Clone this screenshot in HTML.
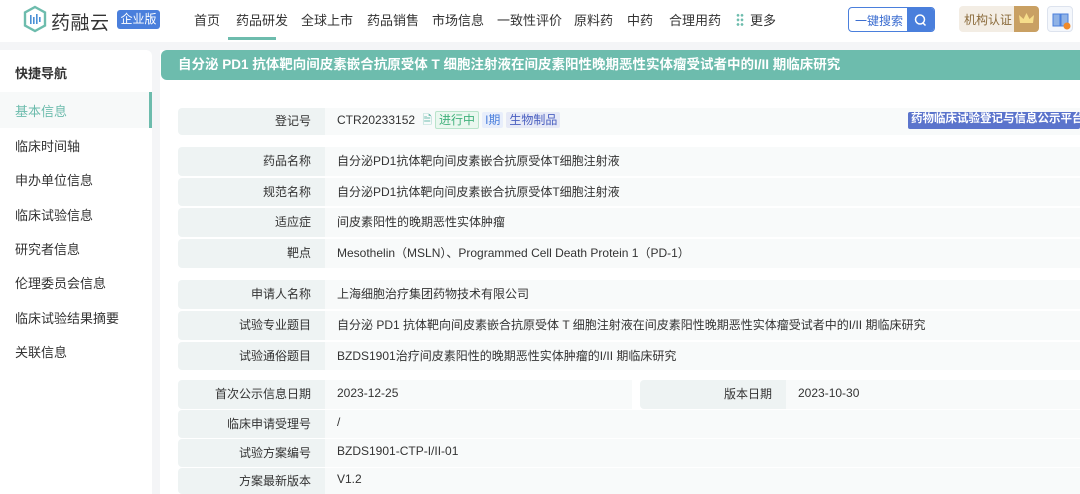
<!DOCTYPE html>
<html><head><meta charset="utf-8"><style>
*{margin:0;padding:0;box-sizing:border-box}
body{width:1080px;height:494px;overflow:hidden;background:#f4f5f7;font-family:"Liberation Sans","Noto Sans CJK SC",sans-serif;color:#333;position:relative}
.hdr{position:absolute;left:0;top:0;width:1080px;height:42px;background:#fff}
.nav a{position:absolute;top:10px;font-size:13px;color:#333;text-decoration:none}
.side{position:absolute;left:0;top:50px;width:152px;height:444px;background:#fff;border-radius:0 6px 0 0}
.side div{position:absolute;left:15px;font-size:13px;color:#333}
.main{position:absolute;left:160px;top:50px;width:920px;height:444px;background:#fff}
.title{position:absolute;left:161px;top:50px;width:919px;height:30px;background:#6dbcad;border-radius:6px 0 0 6px;color:#fff;font-weight:bold;font-size:13.5px;line-height:30px;padding-left:17px;white-space:nowrap}
.l{position:absolute;background:#eef3f3;border-radius:4px 0 0 4px;font-size:12px;color:#333;text-align:right;padding-right:14px}
.v{position:absolute;background:#f8fafa;font-size:12px;color:#333;padding-left:12px;white-space:nowrap}
.tag{display:inline-block;font-size:12px;line-height:16px;padding:0 3px;border-radius:2px;margin-left:3px}
</style></head><body>
<div class="hdr">
<svg style="position:absolute;left:22px;top:5px" width="26" height="28" viewBox="0 0 26 28"><path d="M13 2 L23 7.5 L23 20.5 L13 26 L3 20.5 L3 7.5 Z" fill="none" stroke="#6dbcad" stroke-width="2.4"/><g fill="#4a8fd6"><rect x="8" y="10" width="1.6" height="9"/><rect x="11" y="12" width="1.6" height="7"/><rect x="14" y="9" width="1.6" height="10"/><rect x="17" y="12" width="1.6" height="5"/></g></svg>
<div style="position:absolute;left:51px;top:8px;font-size:19px;color:#333;letter-spacing:0.5px;white-space:nowrap">药融云</div>
<div style="position:absolute;left:117px;top:10px;width:43px;height:19px;background:#4a7fdc;border-radius:3px;color:#fff;font-size:12px;line-height:19px;text-align:center">企业版</div>
<div class="nav">
<a style="left:194px">首页</a><a style="left:236px">药品研发</a><a style="left:301px">全球上市</a><a style="left:367px">药品销售</a><a style="left:432px">市场信息</a><a style="left:497px">一致性评价</a><a style="left:574px">原料药</a><a style="left:627px">中药</a><a style="left:669px">合理用药</a><a style="left:750px">更多</a>
</div>
<div style="position:absolute;left:736px;top:13px;width:8px;height:14px;background:radial-gradient(circle,#6dbcad 1.2px,transparent 1.5px) 0 0/4px 4.6px"></div>
<div style="position:absolute;left:228px;top:37px;width:48px;height:3px;background:#6dbcad"></div>
<div style="position:absolute;left:848px;top:7px;width:87px;height:25px;border:1px solid #4a7fdc;border-radius:4px;background:#fff;overflow:hidden"><span style="position:absolute;left:6px;top:4px;font-size:12px;color:#3a6cd0;white-space:nowrap">一键搜索</span><div style="position:absolute;right:0;top:0;width:27px;height:25px;background:#4a7fdc"><svg width="27" height="25"><circle cx="13" cy="11.5" r="4.5" fill="none" stroke="#fff" stroke-width="1.5"/><path d="M16 15 L18.5 17.5" stroke="#fff" stroke-width="1.5"/></svg></div></div>
<div style="position:absolute;left:959px;top:6px;width:80px;height:26px;background:#f3ede4;border-radius:4px"><span style="position:absolute;left:5px;top:5px;font-size:12px;color:#8a6a3a;white-space:nowrap">机构认证</span><div style="position:absolute;right:0;top:0;width:25px;height:26px;background:#c9a063;border-radius:0 4px 4px 0"><svg width="25" height="26"><path d="M6 17 L5 9 L9.5 13 L12.5 7 L15.5 13 L20 9 L19 17 Z" fill="#f6dd8a"/></svg></div></div>
<div style="position:absolute;left:1047px;top:6px;width:26px;height:26px;border:1px solid #dde3ee;border-radius:4px;background:#f4f7fc"><svg width="26" height="26"><path d="M5 7 h7 v12 h-7z M13 7 h7 v12 h-7z" fill="#8fb2e6" stroke="#4a7fdc" stroke-width="1"/><circle cx="19" cy="19" r="3.5" fill="#f08a2a"/></svg></div>
</div>
<div class="side">
<div style="top:13px;font-weight:bold">快捷导航</div>
<div style="left:0;top:42px;width:152px;height:36px;background:#f7f9f9;border-right:3px solid #6dbcad"></div>
<div style="top:51px;color:#6dbcad">基本信息</div>
<div style="top:86px">临床时间轴</div>
<div style="top:120px">申办单位信息</div>
<div style="top:155px">临床试验信息</div>
<div style="top:189px">研究者信息</div>
<div style="top:223px">伦理委员会信息</div>
<div style="top:258px">临床试验结果摘要</div>
<div style="top:292px">关联信息</div>
</div>
<div class="main"></div>
<div class="title">自分泌 PD1 抗体靶向间皮素嵌合抗原受体 T 细胞注射液在间皮素阳性晚期恶性实体瘤受试者中的I/II 期临床研究</div>

<div class="l" style="left:178px;top:108px;width:147px;height:27px;line-height:27px">登记号</div>
<div class="v" style="left:325px;top:108px;width:755px;height:27px;line-height:25px">CTR20233152 <span style="color:#6dbcad;margin-left:4px">🗎</span><span class="tag" style="color:#3fb07a;background:#eaf7ef;border:1px solid #b9e4cb">进行中</span><span class="tag" style="color:#4a7fdc;background:#e8eefb">I期</span><span class="tag" style="color:#4a5fc0;background:#e6e9f6">生物制品</span></div>
<div style="position:absolute;left:908px;top:112px;width:172px;height:17px;background:#5b74cc;border-radius:2px;color:#fff;font-size:11.5px;font-weight:bold;line-height:14px;padding-left:3px;overflow:hidden;white-space:nowrap">药物临床试验登记与信息公示平台</div>

<div class="l" style="left:178px;top:147px;width:147px;height:29px;line-height:29px">药品名称</div><div class="v" style="left:325px;top:147px;width:755px;height:29px;line-height:29px">自分泌PD1抗体靶向间皮素嵌合抗原受体T细胞注射液</div>
<div class="l" style="left:178px;top:178px;width:147px;height:28px;line-height:28px">规范名称</div><div class="v" style="left:325px;top:178px;width:755px;height:28px;line-height:28px">自分泌PD1抗体靶向间皮素嵌合抗原受体T细胞注射液</div>
<div class="l" style="left:178px;top:208px;width:147px;height:29px;line-height:29px">适应症</div><div class="v" style="left:325px;top:208px;width:755px;height:29px;line-height:29px">间皮素阳性的晚期恶性实体肿瘤</div>
<div class="l" style="left:178px;top:239px;width:147px;height:29px;line-height:29px">靶点</div><div class="v" style="left:325px;top:239px;width:755px;height:29px;line-height:29px">Mesothelin（MSLN）、Programmed Cell Death Protein 1（PD-1）</div>

<div class="l" style="left:178px;top:280px;width:147px;height:29px;line-height:29px">申请人名称</div><div class="v" style="left:325px;top:280px;width:755px;height:29px;line-height:29px">上海细胞治疗集团药物技术有限公司</div>
<div class="l" style="left:178px;top:311px;width:147px;height:29px;line-height:29px">试验专业题目</div><div class="v" style="left:325px;top:311px;width:755px;height:29px;line-height:29px">自分泌 PD1 抗体靶向间皮素嵌合抗原受体 T 细胞注射液在间皮素阳性晚期恶性实体瘤受试者中的I/II 期临床研究</div>
<div class="l" style="left:178px;top:342px;width:147px;height:28px;line-height:28px">试验通俗题目</div><div class="v" style="left:325px;top:342px;width:755px;height:28px;line-height:28px">BZDS1901治疗间皮素阳性的晚期恶性实体肿瘤的I/II 期临床研究</div>

<div class="l" style="left:178px;top:380px;width:147px;height:29px;line-height:29px">首次公示信息日期</div><div class="v" style="left:325px;top:380px;width:307px;height:29px;line-height:26px">2023-12-25</div>
<div class="l" style="left:640px;top:380px;width:146px;height:29px;line-height:29px">版本日期</div><div class="v" style="left:786px;top:380px;width:294px;height:29px;line-height:26px">2023-10-30</div>
<div class="l" style="left:178px;top:410px;width:147px;height:28px;line-height:28px">临床申请受理号</div><div class="v" style="left:325px;top:410px;width:755px;height:28px;line-height:24px">/</div>
<div class="l" style="left:178px;top:439px;width:147px;height:28px;line-height:28px">试验方案编号</div><div class="v" style="left:325px;top:439px;width:755px;height:28px;line-height:24px">BZDS1901-CTP-I/II-01</div>
<div class="l" style="left:178px;top:468px;width:147px;height:26px;line-height:26px">方案最新版本</div><div class="v" style="left:325px;top:468px;width:755px;height:26px;line-height:22px">V1.2</div>
</body></html>
